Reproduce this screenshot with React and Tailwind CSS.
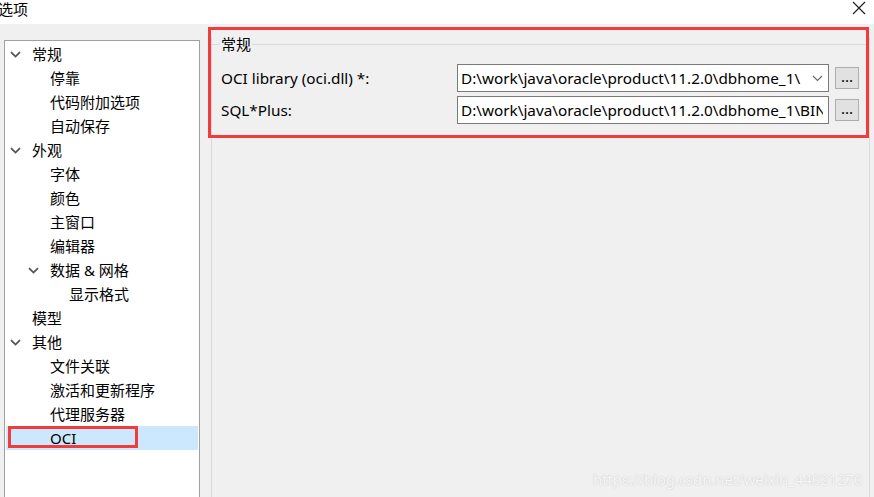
import React from "react";

const tree = [
  { t: "常规", l: 0, c: true },
  { t: "停靠", l: 1 },
  { t: "代码附加选项", l: 1 },
  { t: "自动保存", l: 1 },
  { t: "外观", l: 0, c: true },
  { t: "字体", l: 1 },
  { t: "颜色", l: 1 },
  { t: "主窗口", l: 1 },
  { t: "编辑器", l: 1 },
  { t: "数据 & 网格", l: 1, c: true },
  { t: "显示格式", l: 2 },
  { t: "模型", l: 0 },
  { t: "其他", l: 0, c: true },
  { t: "文件关联", l: 1 },
  { t: "激活和更新程序", l: 1 },
  { t: "代理服务器", l: 1 },
  { t: "OCI", l: 1, sel: true },
];

function Chevron() {
  return (
    <svg width="11" height="7" viewBox="0 0 11 7" className="shrink-0">
      <path d="M1 1.2 L5.5 5.6 L10 1.2" fill="none" stroke="#555" strokeWidth="1.8" />
    </svg>
  );
}

function TreeRow({ item }) {
  const textPad = item.l === 0 ? "pl-[26px]" : item.l === 1 ? "pl-[44px]" : "pl-[63px]";
  const chevPad = item.l === 0 ? "left-[4px]" : "left-[22px]";
  return (
    <div className={`relative h-6 flex items-center ${item.sel ? "bg-[#cce8ff]" : ""}`}>
      {item.c && (
        <div className={`absolute top-[9px] ${chevPad}`}>
          <Chevron />
        </div>
      )}
      <span className={`${textPad} whitespace-nowrap`}>{item.t}</span>
    </div>
  );
}

function Field({ label, value, combo }) {
  return (
    <div className="flex items-center h-7">
      <div className="w-[236px] whitespace-nowrap">{label}</div>
      <div className="w-[372px] h-7 border border-[#7a7a7a] bg-white flex items-center pl-[3px] pr-[5px]">
        <div className="flex-1 overflow-hidden whitespace-nowrap">{value}</div>
        {combo && (
          <svg width="11" height="7" viewBox="0 0 11 7" className="ml-[6px] shrink-0">
            <path d="M1 1 L5.5 5.5 L10 1" fill="none" stroke="#666" strokeWidth="1.1" />
          </svg>
        )}
      </div>
      <div className="ml-[6px] w-6 h-[22px] border border-[#adadad] bg-[#e1e1e1] flex items-center justify-center text-[15px] leading-none pb-[4px]">
        ...
      </div>
    </div>
  );
}

export default function App() {
  return (
    <div
      className="relative w-[874px] h-[497px] overflow-hidden bg-[#f0f0f0] text-[15px] text-black"
      style={{ fontFamily: '"Noto Sans", "Noto Sans CJK SC", sans-serif' }}
    >
      {/* title bar */}
      <div className="h-6 bg-white flex items-center justify-between">
        <span className="-ml-[2px] leading-none -mt-[6px]">选项</span>
        <svg width="14" height="14" viewBox="0 0 14 14" className="mr-[8px] -mt-[8px]">
          <path d="M1 1 L13 13 M13 1 L1 13" stroke="#222" strokeWidth="1.2" />
        </svg>
      </div>

      <div className="flex pt-[13px]">
        {/* tree */}
        <div className="ml-1 mt-[3px] w-[196px] h-[480px] border border-[#a0a0a0] bg-white pt-[1px] px-[1px]">
          {tree.map((it, i) => (
            <TreeRow key={i} item={it} />
          ))}
        </div>

        {/* right panel */}
        <div className="ml-[11px] w-[659px] h-[480px] border-l border-r border-[#dadada]">
          <div className="flex items-center h-[15px]">
            <div className="w-2 h-px bg-[#dadada]" />
            <span className="px-[1px] leading-none">常规</span>
            <div className="flex-1 h-px bg-[#dadada]" />
          </div>
          <div className="mt-3 pl-[9px] flex flex-col gap-1 text-[15.3px]">
            <Field label="OCI library (oci.dll) *:" value="D:\work\java\oracle\product\11.2.0\dbhome_1\" combo />
            <Field label="SQL*Plus:" value="D:\work\java\oracle\product\11.2.0\dbhome_1\BIN" />
          </div>
        </div>
      </div>

      {/* annotations */}
      <div className="absolute left-[208px] top-[27px] w-[661px] h-[111px] border-[3px] border-[#f03c3c]" />
      <div className="absolute left-[8px] top-[426px] w-[130px] h-[22px] border-[3px] border-[#f03c3c]" />

      {/* watermark */}
      <div className="absolute left-[593px] top-[468px] text-[14.8px] text-[#f7f7f7] whitespace-nowrap [text-shadow:0_0_1.5px_#bdbdbd]">
        https://blog.csdn.net/weixin_44021270
      </div>
    </div>
  );
}
